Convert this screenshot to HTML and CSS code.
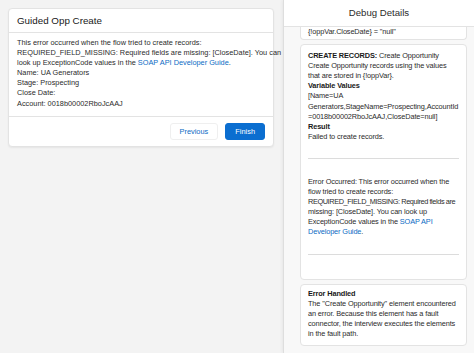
FILE: index.html
```html
<!DOCTYPE html>
<html lang="en">

<head>
  <meta charset="UTF-8">
  <meta name="viewport" content="width=device-width, initial-scale=1.0">
  <title>Guided Opp Create</title>
  <link rel="stylesheet" href="styles.css">
</head>

<body>
  <div class="layout">
    <div class="flow-area">
      <div class="flow-card">
        <div class="flow-header">Guided Opp Create</div>
        <div class="flow-body">
          <p>This error occurred when the flow tried to create records:<br>
            REQUIRED_FIELD_MISSING: Required fields are missing: [CloseDate]. You can<br>
            look up ExceptionCode values in the <a href="#">SOAP API Developer Guide</a>.</p>
          <p>Name: UA Generators</p>
          <p>Stage: Prospecting</p>
          <p>Close Date:</p>
          <p>Account: 0018b00002RboJcAAJ</p>
        </div>
        <div class="flow-footer">
          <button class="btn btn-neutral">Previous</button>
          <button class="btn btn-brand">Finish</button>
        </div>
      </div>
    </div>

    <div class="debug-panel">
      <div class="debug-header">Debug Details</div>
      <div class="debug-body">
        <div class="debug-card cut">
          <p>{!oppVar.CloseDate} = "null"</p>
        </div>

        <div class="debug-card">
          <p><b>CREATE RECORDS:</b> Create Opportunity</p>
          <p>Create Opportunity records using the values<br>that are stored in {!oppVar}.</p>
          <p><b>Variable Values</b></p>
          <p>[Name=UA<br>Generators,StageName=Prospecting,AccountId<br>=0018b00002RboJcAAJ,CloseDate=null]</p>
          <p><b>Result</b></p>
          <p>Failed to create records.</p>
          <hr>
          <p>Error Occurred: This error occurred when the<br>
            flow tried to create records:<br>
            <span class="tight">REQUIRED_FIELD_MISSING: Required fields are</span><br>
            missing: [CloseDate]. You can look up<br>
            ExceptionCode values in the <a href="#">SOAP API<br>Developer Guide</a>.</p>
          <hr class="last">
        </div>

        <div class="debug-card handled">
          <p><b>Error Handled</b></p>
          <p>The "Create Opportunity" element encountered<br>
            an error. Because this element has a fault<br>
            connector, the interview executes the elements<br>
            in the fault path.</p>
        </div>
      </div>
    </div>
  </div>
</body>

</html>
```

FILE: styles.css
```css
* {
  margin: 0;
  padding: 0;
  box-sizing: border-box;
}

body {
  font-family: "Liberation Sans", Arial, sans-serif;
  font-size: 7.35px;
  line-height: 10.1px;
  color: #181818;
  background: #f3f3f3;
  overflow: hidden;
}

a {
  color: #0b6bc4;
  text-decoration: none;
}

.layout {
  display: flex;
  height: 353px;
}

.flow-area {
  flex: none;
  width: 283px;
  padding: 8px 9px 8px 8px;
}

.flow-card {
  background: white;
  border: 1px solid #e3e3e3;
  border-radius: 4px;
  box-shadow: 0 1px 2px rgba(0, 0, 0, 0.06);
}

.flow-header {
  font-size: 9.8px;
  line-height: 12px;
  padding: 6px 8px 5px;
  border-bottom: 1px solid #e3e3e3;
}

.flow-body {
  padding: 5px 8px 7px;
  color: #2b2b2b;
  white-space: nowrap;
}

.flow-footer {
  display: flex;
  justify-content: flex-end;
  gap: 7px;
  padding: 6px 8px 6px;
  border-top: 1px solid #e3e3e3;
}

.btn {
  font-family: inherit;
  font-size: 7.4px;
  height: 17px;
  padding: 0 9px;
  border-radius: 3px;
  cursor: pointer;
}

.btn-neutral {
  background: white;
  color: #0b6bc4;
  border: 1px solid #efefef;
}

.btn-brand {
  background: #0b6ed0;
  color: white;
  border: 1px solid #0b6ed0;
}

.debug-panel {
  flex: 1;
  min-width: 0;
  background: #f8f8f8;
  border-left: 1px solid #dedede;
  box-shadow: -1px 0 3px rgba(0, 0, 0, 0.05);
}

.debug-header {
  height: 27px;
  background: white;
  border-bottom: 1px solid #e3e3e3;
  text-align: center;
  font-size: 9.6px;
  line-height: 26px;
  color: #2b2b2b;
}

.debug-body {
  display: flex;
  flex-direction: column;
  gap: 4px;
  padding: 0 7px 0 16px;
}

.debug-card {
  background: white;
  border: 1px solid #e3e3e3;
  border-radius: 4px;
  padding: 6px 7px 6px;
  color: #2b2b2b;
  white-space: nowrap;
  letter-spacing: -0.12px;
}

.debug-card .tight {
  letter-spacing: -0.4px;
}

.debug-card.cut {
  border-top: none;
  border-radius: 0 0 4px 4px;
  padding: 0 7px 2px;
}

.debug-card.handled {
  padding: 4px 7px 6px;
}

.debug-card b {
  color: #181818;
}

.debug-card hr {
  border: none;
  border-top: 1px solid #dcdcdc;
  margin: 16px 0 18px;
}

.debug-card hr.last {
  margin: 16px 0 18px;
}
```
